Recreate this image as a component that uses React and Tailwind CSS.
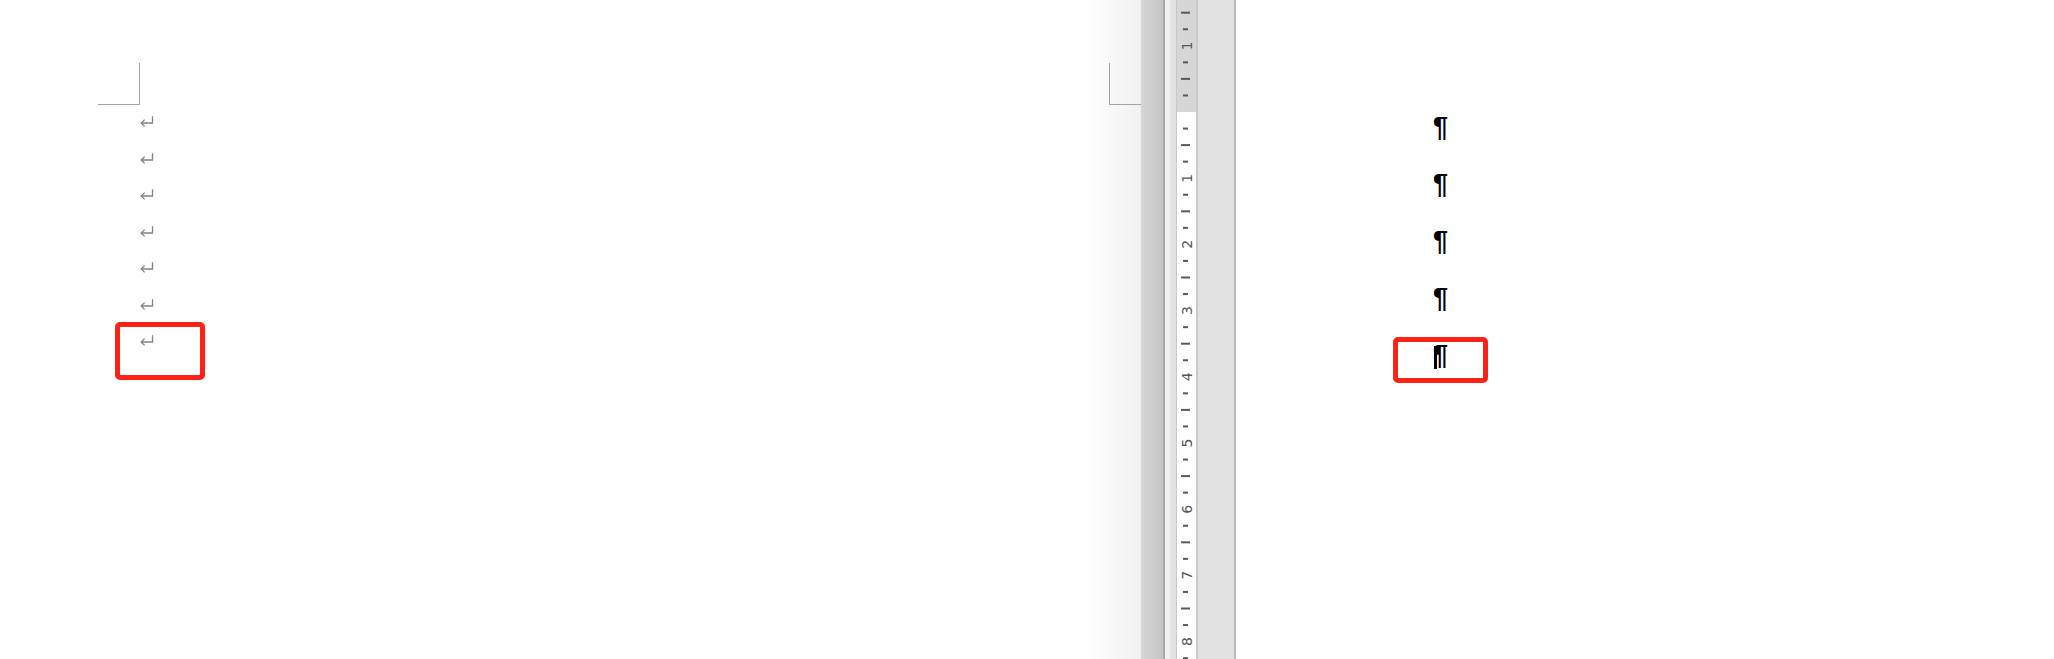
import React from "react";

const UNIT = 66.2;
const ORIGIN = 112;

function Ruler() {
  const ticks = [];
  const nums = [];
  for (let q = -6; q <= 33; q++) {
    const y = ORIGIN + (q / 4) * UNIT;
    if (y < 0 || y > 660) continue;
    if (q === 0) continue;
    const r = ((q % 4) + 4) % 4;
    if (r === 0) {
      nums.push({ y, n: Math.abs(q / 4) });
    } else if (r === 2) {
      ticks.push(<rect key={q} x={4} y={y - 1} width={9} height={2} fill="#595959" />);
    } else {
      ticks.push(<rect key={q} x={6} y={y - 1} width={5} height={2} fill="#595959" />);
    }
  }
  return (
    <div className="relative w-[22px] h-full border-l border-r-2 border-[#c9c9c9] flex flex-col">
      <div className="h-[112px] bg-[#d6d6d6] shrink-0" />
      <div className="flex-1 bg-white" />
      <svg className="absolute inset-0" width="19" height="659" viewBox="0 0 19 659">
        {ticks}
        {nums.map((d) => (
          <text
            key={d.y}
            x={10}
            y={d.y}
            transform={`rotate(-90 10 ${d.y})`}
            textAnchor="middle"
            dominantBaseline="central"
            fontSize="14"
            fill="#555555"
            fontFamily="'DejaVu Sans', 'Liberation Sans', sans-serif"
          >
            {d.n}
          </text>
        ))}
      </svg>
    </div>
  );
}

function ReturnMark() {
  return (
    <svg width="14" height="11" viewBox="0 0 14 11" className="block">
      <path d="M12.5 0.3 V7 H1.2" fill="none" stroke="#828282" strokeWidth="1.3" />
      <path d="M4.6 3.6 L1.2 7 L4.6 10.4" fill="none" stroke="#828282" strokeWidth="1.3" />
    </svg>
  );
}

export default function App() {
  const marks = [0, 1, 2, 3, 4, 5, 6];
  const pilcrows = [0, 1, 2, 3, 4];
  return (
    <div className="relative w-[2054px] h-[659px] flex overflow-hidden bg-white font-['Liberation_Sans',Arial,sans-serif]">
      {/* left page */}
      <div className="w-[1141px] h-full shrink-0 bg-[linear-gradient(to_right,#ffffff_95%,#f1f1f1)] flex flex-col">
        <div className="flex justify-between pt-[63px]">
          <div className="ml-[98px] w-[42px] h-[42px] border-r border-b border-[#a3a3a3]" />
          <div className="w-[32px] h-[42px] border-l border-b border-[#a3a3a3]" />
        </div>
        <div className="flex flex-col gap-[25.5px] pl-[140px] pt-[11px]">
          {marks.map((m) => (
            <ReturnMark key={m} />
          ))}
        </div>
      </div>

      {/* gray gutter */}
      <div className="w-[24px] h-full shrink-0 bg-[linear-gradient(to_right,#d5d5d5,#c5c5c5)] border-r-2 border-[#a9a9a9]" />
      <div className="w-[5px] h-full shrink-0 bg-[#f0f0f0]" />
      <div className="w-[6px] h-full shrink-0 bg-[#e3e3e3]" />
      <Ruler />
      <div className="w-[36px] h-full shrink-0 bg-[#e1e1e1]" />
      <div className="w-[2px] h-full shrink-0 bg-[#b8bbbf]" />

      {/* right page */}
      <div className="flex-1 h-full bg-white flex flex-col pt-[99px] pl-[197px]">
        {pilcrows.map((p) => (
          <div key={p} className="relative h-[57px] leading-[57px] text-[27px] font-bold text-black">
            ¶
            {p === 4 && <div className="absolute left-[1px] top-[19px] w-[3px] h-[23px] bg-black" />}
          </div>
        ))}
      </div>

      {/* red annotation boxes */}
      <div className="absolute left-[115px] top-[322px] w-[90px] h-[58px] border-[5px] border-[#fe2116] rounded-[5px]" />
      <div className="absolute left-[1393px] top-[337px] w-[95px] h-[46px] border-[5px] border-[#fe2116] rounded-[5px]" />
    </div>
  );
}
